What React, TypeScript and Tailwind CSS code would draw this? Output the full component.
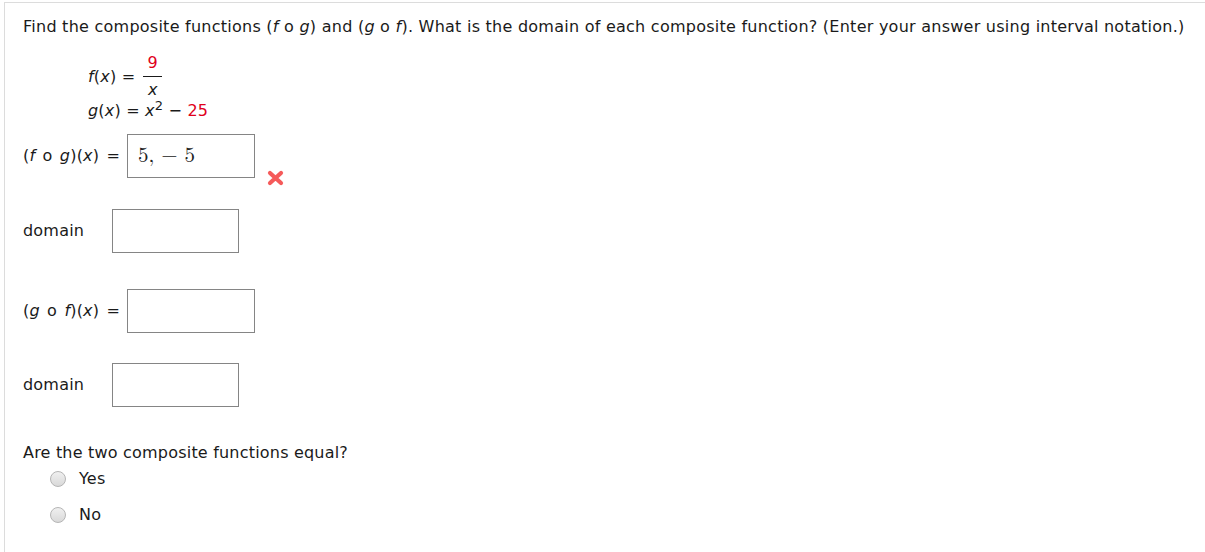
import React from "react";

const font = { fontFamily: '"DejaVu Sans", Verdana, sans-serif' };

function Box({ w, children }: { w: string; children?: React.ReactNode }) {
  return (
    <div className={`${w} h-[44px] border border-[#858585] bg-white flex items-center pl-[10px]`}>
      {children}
    </div>
  );
}

function Radio() {
  return (
    <div className="w-[16px] h-[16px] rounded-full border border-[#b5b5b5] bg-gradient-to-b from-[#f0f0f0] to-[#d9d9d9]" />
  );
}

export default function App() {
  return (
    <div className="w-[1205px] h-[552px] bg-white pt-[2px] pl-[4px] overflow-hidden" style={font}>
      <div className="h-full border-t border-l border-[#dcdcdc] pl-[18px] pt-[15px] text-[16px] leading-[18px] tracking-[0.2px] text-[#1a1a1a]">
        <div className="whitespace-nowrap tracking-[0.25px]">
          Find the composite functions (<i>f</i> o <i>g</i>) and (<i>g</i> o <i>f</i>). What is the domain of each composite function? (Enter your answer using interval notation.)
        </div>

        <div className="flex items-center mt-[18px] ml-[65px]">
          <span>
            <i>f</i>(<i>x</i>) =
          </span>
          <div className="flex flex-col items-center ml-[8px]">
            <span className="text-[#e0001b] leading-[18px]">9</span>
            <div className="w-[19px] h-[1px] bg-[#1a1a1a] mt-[4px] mb-[4px]" />
            <span className="leading-[18px]">
              <i>x</i>
            </span>
          </div>
        </div>

        <div className="mt-[3px] ml-[65px] h-[18px] whitespace-nowrap">
          <i>g</i>(<i>x</i>) = <i>x</i>
          <span className="relative -top-[6px] text-[13px] leading-none">2</span> − <span className="text-[#e0001b]">25</span>
        </div>

        <div className="flex items-start mt-[14px]">
          <div className="flex items-center h-[44px]">
            <span className="w-[104px] whitespace-nowrap [word-spacing:2px]">
              (<i>f</i> o <i>g</i>)(<i>x</i>) =
            </span>
          </div>
          <Box w="w-[128px]">
            <span className="text-[21px] text-[#222] tracking-normal" style={{ fontFamily: '"Latin Modern Math", "DejaVu Serif", "Liberation Serif", serif' }}>
              5, − 5
            </span>
          </Box>
          <svg className="ml-[12px] mt-[36px]" width="17" height="16" viewBox="0 0 17 16">
            <path d="M3 3 L14 13 M14 3 L3 13" stroke="#f55a5a" strokeWidth="4.2" strokeLinecap="round" />
          </svg>
        </div>

        <div className="flex items-center mt-[23px]">
          <span className="w-[89px]">domain</span>
          <Box w="w-[127px]" />
        </div>

        <div className="flex items-center mt-[36px]">
          <span className="w-[104px] whitespace-nowrap [word-spacing:2px]">
            (<i>g</i> o <i>f</i>)(<i>x</i>) =
          </span>
          <Box w="w-[128px]" />
        </div>

        <div className="flex items-center mt-[30px]">
          <span className="w-[89px]">domain</span>
          <Box w="w-[127px]" />
        </div>

        <div className="mt-[37px] whitespace-nowrap">Are the two composite functions equal?</div>

        <div className="flex items-center mt-[8px] ml-[27px] h-[18px]">
          <Radio />
          <span className="ml-[13px]">Yes</span>
        </div>
        <div className="flex items-center mt-[18px] ml-[27px] h-[18px]">
          <Radio />
          <span className="ml-[13px]">No</span>
        </div>
      </div>
    </div>
  );
}
